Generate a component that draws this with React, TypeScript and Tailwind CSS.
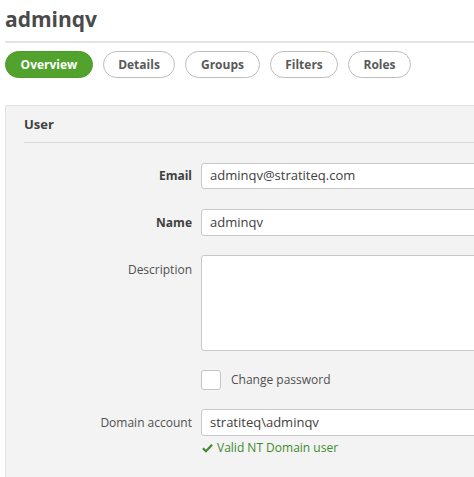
import React from "react";

const font = { fontFamily: '"Open Sans", "Liberation Sans", sans-serif' };

function Tab({ label, active, w }: { label: string; active?: boolean; w: string }) {
  return (
    <div
      className={
        "flex h-[27px] items-center justify-center rounded-full border text-[12px] font-bold " +
        w +
        (active
          ? " border-[#4c9a2a] bg-[#52a22e] text-white"
          : " border-[#bdbdbd] bg-white text-[#595959]")
      }
    >
      {label}
    </div>
  );
}

export default function App() {
  return (
    <div className="h-[477px] w-[474px] overflow-hidden bg-white text-[#404040]" style={font}>
      <div className="px-[5px]">
        <div className="flex h-[41px] items-center pb-[2px] text-[21px] font-bold leading-none text-[#4a4a4a]">
          adminqv
        </div>
        <div className="h-[2px] w-[470px] bg-[#e3e3e3]" />
        <div className="mt-[8px] flex gap-[10px]">
          <Tab label="Overview" active w="w-[88px]" />
          <Tab label="Details" w="w-[72px]" />
          <Tab label="Groups" w="w-[75px]" />
          <Tab label="Filters" w="w-[68px]" />
          <Tab label="Roles" w="w-[63px]" />
        </div>
      </div>
      <div className="ml-[5px] mt-[27px] w-[520px] rounded-tl-[3px] border-l border-t border-[#e2e2e2] bg-[#f3f3f3] pl-[18px]">
        <div className="flex h-[36px] items-center pt-[1px] text-[13px] font-bold text-[#404040]">User</div>
        <div className="h-[1px] bg-[#dcdcdc]" />
        <div className="pt-[20px]">
          <div className="flex items-center">
            <div className="w-[168px] text-right text-[12px] font-bold text-[#404040]">Email</div>
            <div className="ml-[9px] flex h-[26px] flex-1 items-center rounded-[3px] border border-[#c8c8c8] bg-white pl-[8px] text-[13px] text-[#404040]">
              adminqv@stratiteq.com
            </div>
          </div>
          <div className="mt-[20px] flex items-center">
            <div className="w-[168px] text-right text-[12px] font-bold text-[#404040]">Name</div>
            <div className="ml-[9px] flex h-[27px] flex-1 items-center rounded-[3px] border border-[#c8c8c8] bg-white pl-[8px] text-[13px] text-[#404040]">
              adminqv
            </div>
          </div>
          <div className="mt-[19px] flex items-start">
            <div className="w-[168px] pt-[6px] text-right text-[12px] text-[#505050]">Description</div>
            <div className="ml-[9px] h-[96px] flex-1 rounded-[3px] border border-[#c8c8c8] bg-white" />
          </div>
          <div className="mt-[19px] flex items-center">
            <div className="w-[168px]" />
            <div className="ml-[9px] h-[20px] w-[20px] rounded-[3px] border border-[#c4c4c4] bg-white" />
            <div className="ml-[10px] text-[12px] text-[#505050]">Change password</div>
          </div>
          <div className="mt-[19px] flex items-center">
            <div className="w-[168px] text-right text-[12px] text-[#505050]">Domain account</div>
            <div className="ml-[9px] flex h-[27px] flex-1 items-center rounded-[3px] border border-[#c8c8c8] bg-white pl-[8px] text-[13px] text-[#404040]">
              stratiteq\adminqv
            </div>
          </div>
          <div className="mt-[4px] flex h-[16px] items-center pl-[178px] text-[12px] text-[#3e8a2e]">
            <svg width="11" height="10" viewBox="0 0 12 10" className="mr-[4px]">
              <path d="M1 5.2 L4.3 8.5 L11 1.5" fill="none" stroke="#3e8a2e" strokeWidth="2.4" />
            </svg>
            Valid NT Domain user
          </div>
          <div className="h-[40px]" />
        </div>
      </div>
    </div>
  );
}
